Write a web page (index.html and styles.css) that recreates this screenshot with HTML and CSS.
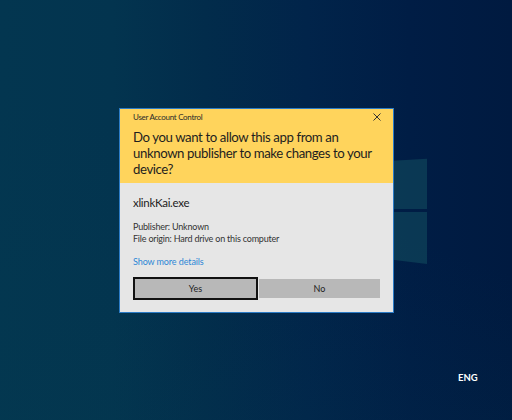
FILE: index.html
```html
<!DOCTYPE html>
<html>
<head>
<meta charset="utf-8">
<link rel="stylesheet" href="styles.css">
</head>
<body>
<div class="desktop">
  <div class="logo">
    <div class="pane pane-top"></div>
    <div class="pane pane-bottom"></div>
  </div>
  <div class="dialog">
    <div class="header">
      <div class="caption-row">
        <span class="caption">User Account Control</span>
        <svg class="close" width="10" height="10" viewBox="0 0 10 10"><path d="M1.5 1.5 L8.5 8.5 M8.5 1.5 L1.5 8.5" stroke="#333" stroke-width="1" fill="none"/></svg>
      </div>
      <div class="title">Do you want to allow this app from an unknown publisher to make changes to your device?</div>
    </div>
    <div class="body">
      <div class="app">xlinkKai.exe</div>
      <div class="info">
        <div>Publisher: Unknown</div>
        <div>File origin: Hard drive on this computer</div>
      </div>
      <div class="link">Show more details</div>
      <div class="buttons">
        <div class="btn yes">Yes</div>
        <div class="btn no">No</div>
      </div>
    </div>
  </div>
  <div class="eng">ENG</div>
</div>
</body>
</html>
```
FILE: styles.css
```css
html, body {
  margin: 0;
  padding: 0;
}
body {
  width: 512px;
  height: 420px;
  overflow: hidden;
  font-family: Lato, "Open Sans", sans-serif;
}
.desktop {
  position: relative;
  width: 512px;
  height: 420px;
  background: linear-gradient(90deg, #033650 0%, #03344f 22%, #022c4b 40%, #01244a 60%, #001d45 80%, #001a40 100%);
  padding: 108px 0 0 119px;
  box-sizing: border-box;
}
.desktop::before {
  content: "";
  position: absolute;
  inset: 0;
  background: linear-gradient(200deg, rgba(0, 0, 0, 0) 0%, rgba(0, 0, 0, 0) 45%, rgba(4, 60, 80, 0.25) 100%);
  pointer-events: none;
}
.logo {
  position: absolute;
  left: 380px;
  top: 155px;
  width: 47px;
  height: 110px;
}
.pane {
  position: absolute;
  left: 0;
  width: 47px;
  background: rgba(25, 95, 105, 0.42);
}
.pane-top {
  top: 0;
  height: 54px;
  clip-path: polygon(0 12%, 100% 7%, 100% 100%, 0 100%);
}
.pane-bottom {
  top: 57px;
  height: 52px;
  clip-path: polygon(0 0, 100% 0, 100% 100%, 0 89%);
}
.dialog {
  position: relative;
  width: 275px;
  border: 1px solid #2b7bc6;
  box-sizing: border-box;
  background: #e6e6e6;
}
.header {
  background: #ffd45c;
  padding: 2px 12px 6px 13px;
}
.caption-row {
  display: flex;
  justify-content: space-between;
  align-items: center;
  height: 12px;
}
.caption {
  font-size: 8px;
  line-height: 12px;
  letter-spacing: -0.3px;
  color: #2b2b2b;
}
.close {
  margin-right: -1px;
}
.title {
  margin-top: 5.5px;
  font-size: 13.2px;
  line-height: 16px;
  letter-spacing: -0.4px;
  color: #1e1e1e;
}
.body {
  padding: 12px 13px 12px 13px;
}
.app {
  font-size: 11.5px;
  line-height: 16px;
  letter-spacing: -0.3px;
  color: #222;
}
.info {
  margin-top: 10.5px;
  font-size: 9px;
  line-height: 11.5px;
  letter-spacing: -0.2px;
  color: #333;
}
.link {
  margin-top: 11.5px;
  font-size: 9px;
  line-height: 12px;
  letter-spacing: -0.1px;
  color: #2c86d6;
}
.buttons {
  margin-top: 9.5px;
  display: flex;
  align-items: center;
}
.btn {
  font-size: 9px;
  color: #222;
  display: flex;
  align-items: center;
  justify-content: center;
  background: #b8b8b8;
}
.yes {
  width: 125px;
  height: 23px;
  border: 2px solid #111;
  box-sizing: border-box;
}
.no {
  margin-left: 1px;
  width: 121px;
  height: 19px;
}
.eng {
  position: absolute;
  left: 458px;
  top: 372px;
  font-size: 9.5px;
  font-weight: bold;
  line-height: 12px;
  color: #fff;
}
```
